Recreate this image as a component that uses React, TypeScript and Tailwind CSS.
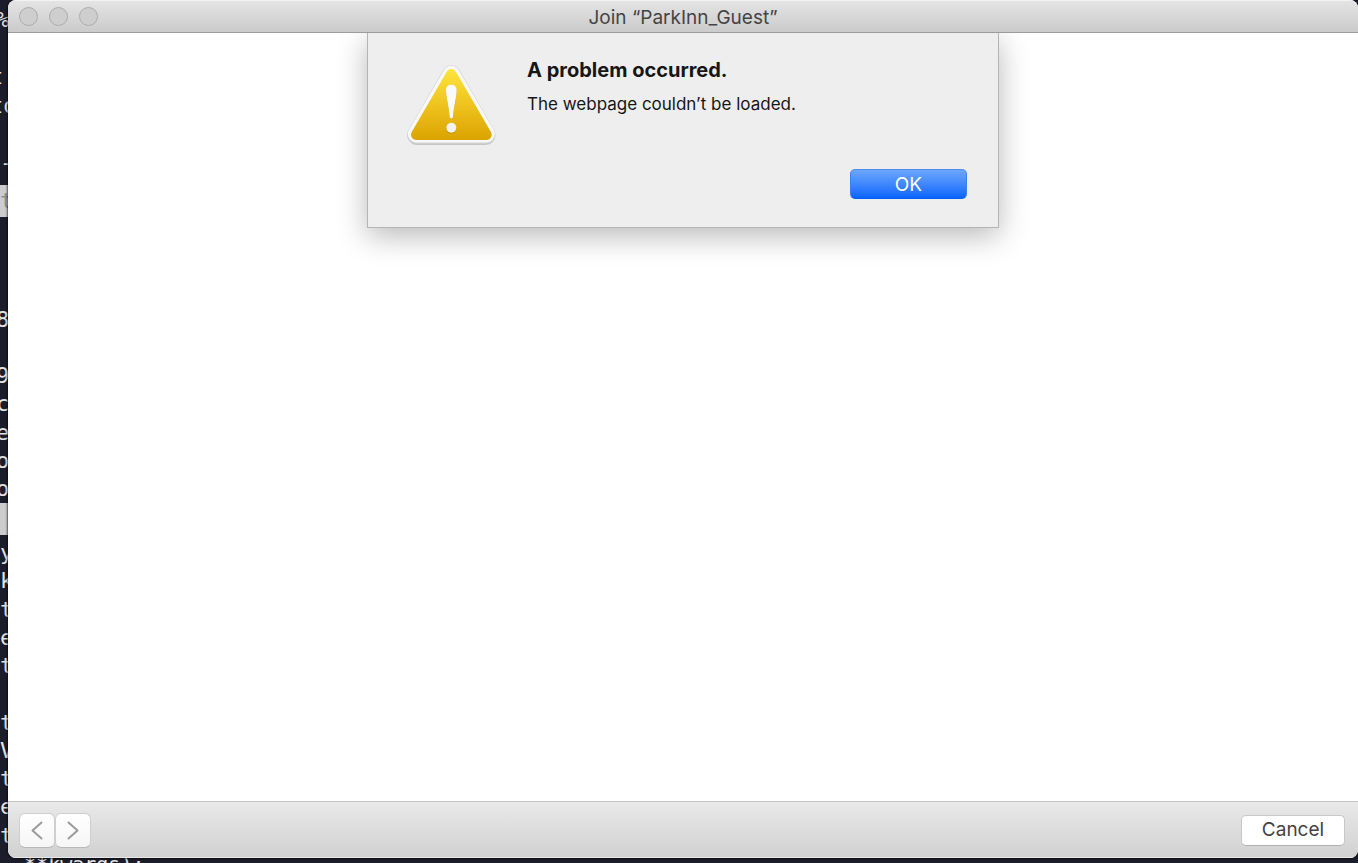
import { useState } from "react";

type Line = { text: string; className?: string };

const topLines: Line[] = [
  { text: "%", className: "-ml-1" },
  { text: "" },
  { text: "t", className: "-ml-2.5" },
  { text: "to", className: "-ml-2.5" },
  { text: "" },
  { text: "-" },
];

const middleLines: Line[] = ["", "", "", "8", "", "9", "c", "e", "o", "o"].map((text) => ({
  text,
  className: "-ml-1",
}));

const bottomLines: Line[] = [
  ...["y", "k", "t", "e", "t", "", "t", "V", "t", "e", "t"].map((text) => ({ text })),
  { text: "  **kwargs):", className: "text-xl leading-none" },
];

function TerminalLines({ lines, className }: { lines: Line[]; className: string }) {
  return (
    <div className={`flex flex-col shrink-0 ${className}`}>
      {lines.map((line, i) => (
        <div key={i} className="flex-1 flex items-center min-h-0">
          <span className={`whitespace-pre leading-none ${line.className ?? ""}`}>{line.text}</span>
        </div>
      ))}
    </div>
  );
}

function Terminal() {
  return (
    <div
      aria-hidden="true"
      className="absolute inset-0 flex flex-col overflow-hidden bg-[#1c1d2b] text-[#e4e4e4] text-[22px] font-['DejaVu_Sans_Mono',monospace]"
    >
      <TerminalLines lines={topLines} className="h-[185px] pt-1.5 pb-2" />
      <div className="h-8 shrink-0 flex items-center bg-[#cdcdcd] text-[#8f8f8f] leading-none">t</div>
      <TerminalLines lines={middleLines} className="h-[286px] pt-1" />
      <div className="h-8 shrink-0 bg-[#cdcdcd]" />
      <TerminalLines lines={bottomLines} className="h-[343px] pt-1" />
    </div>
  );
}

function WarningIcon() {
  return (
    <svg width="89" height="82" viewBox="0 0 267 246" className="shrink-0" aria-hidden="true">
      <defs>
        <linearGradient id="warnFill" x1="0" y1="12" x2="0" y2="228" gradientUnits="userSpaceOnUse">
          <stop offset="0" stopColor="#fde53c" />
          <stop offset="0.5" stopColor="#efc41f" />
          <stop offset="1" stopColor="#dba300" />
        </linearGradient>
      </defs>
      <path d="M133 34 L29 215 H237 Z" fill="#9a9a9a" stroke="#9a9a9a" strokeWidth="56" strokeLinejoin="round" opacity="0.45" />
      <path d="M133 31 L28 212 H238 Z" fill="#d2d2d2" stroke="#d2d2d2" strokeWidth="55" strokeLinejoin="round" />
      <path d="M133 31 L28 210 H238 Z" fill="#f8f8f8" stroke="#f8f8f8" strokeWidth="51" strokeLinejoin="round" />
      <path d="M133 31 L28 212 H238 Z" fill="url(#warnFill)" stroke="url(#warnFill)" strokeWidth="32" strokeLinejoin="round" />
      <path d="M117 81 C117 71 123 65 133 65 C143 65 149 71 149 81 C149 100 140 132 138 160 C137 167 129 167 128 160 C126 132 117 100 117 81 Z" fill="#a67c00" opacity="0.5" />
      <path d="M117 78 C117 68 123 62 133 62 C143 62 149 68 149 78 C149 98 140 130 138 158 C137 165 129 165 128 158 C126 130 117 98 117 78 Z" fill="#fafafa" />
      <circle cx="133" cy="194" r="15" fill="#a67c00" opacity="0.5" />
      <circle cx="133" cy="191" r="15" fill="#f2f2f2" />
    </svg>
  );
}

export default function App() {
  const [open, setOpen] = useState(true);

  const navButton =
    "w-9 h-[35px] flex items-center justify-center rounded-md bg-gradient-to-b from-white to-[#f6f6f6] border border-[#cfcfcf] border-b-[#b9b9b9] text-[#9b9b9b]";

  return (
    <div className="relative min-h-screen flex overflow-hidden pl-2 pb-[5px] font-[Inter,sans-serif]">
      <Terminal />

      <div className="relative flex-1 flex flex-col rounded-lg overflow-hidden bg-white shadow-[0_0_2px_1px_rgba(0,0,0,0.6)]">
        <header className="relative h-[33px] shrink-0 flex items-center justify-center bg-gradient-to-b from-[#e4e4e4] to-[#cbcbcb] border-t border-t-[#f3f3f3] border-b border-b-[#9c9c9c]">
          <div className="absolute left-[11px] flex gap-[11px]">
            {["Close", "Minimize", "Zoom"].map((label) => (
              <button key={label} aria-label={label} disabled className="size-[19px] rounded-full bg-[#cecece] border border-[#acacac]" />
            ))}
          </div>
          <h1 className="pt-0.5 text-[19px] leading-6 text-[#444444]">Join “ParkInn_Guest”</h1>
        </header>

        <main className="flex-1 flex items-start justify-center">
          {open && (
            <div
              role="alertdialog"
              aria-labelledby="alert-title"
              aria-describedby="alert-text"
              className="w-[632px] max-w-full flex flex-col bg-[#eeeeee] border border-t-0 border-[#b4b4b4] pl-[39px] pr-[31px] pt-[31px] pb-7 shadow-[0_8px_28px_rgba(0,0,0,0.28)]"
            >
              <div className="flex gap-[31px]">
                <WarningIcon />
                <div className="-mt-2">
                  <h2 id="alert-title" className="text-xl leading-7 font-bold text-[#161616]">A problem occurred.</h2>
                  <p id="alert-text" className="mt-2 text-[17px] leading-6 text-[#161616]">The webpage couldn’t be loaded.</p>
                </div>
              </div>
              <button
                onClick={() => setOpen(false)}
                className="self-end mt-[23px] w-[117px] h-[30px] rounded-[5px] bg-gradient-to-b from-[#6ba6fb] to-[#0664fe] border border-t-[#4f8eea] border-x-[#3a80f0] border-b-[#0560f2] pt-px text-[19px] leading-6 text-white"
              >
                OK
              </button>
            </div>
          )}
        </main>

        <footer className="h-[57px] shrink-0 flex items-center justify-between pt-px pl-[11px] pr-[13px] bg-gradient-to-b from-[#e9e9e9] to-[#d1d1d1] border-t border-t-[#c4c4c4] border-b border-b-[#e8e8e8]">
          <div className="flex">
            <button aria-label="Back" className={navButton}>
              <svg width="12" height="19" viewBox="0 0 12 19" fill="none" stroke="currentColor" strokeWidth="2" strokeLinecap="round" strokeLinejoin="round">
                <path d="M10.5 1.5 L1.5 9.5 L10.5 17.5" />
              </svg>
            </button>
            <button aria-label="Forward" className={navButton}>
              <svg width="12" height="19" viewBox="0 0 12 19" fill="none" stroke="currentColor" strokeWidth="2" strokeLinecap="round" strokeLinejoin="round">
                <path d="M1.5 1.5 L10.5 9.5 L1.5 17.5" />
              </svg>
            </button>
          </div>
          <button className="w-[104px] h-[31px] rounded-[5px] bg-white border border-[#c8c8c8] border-b-[#b0b0b0] text-[19px] leading-6 text-[#424242]">
            Cancel
          </button>
        </footer>
      </div>
    </div>
  );
}
